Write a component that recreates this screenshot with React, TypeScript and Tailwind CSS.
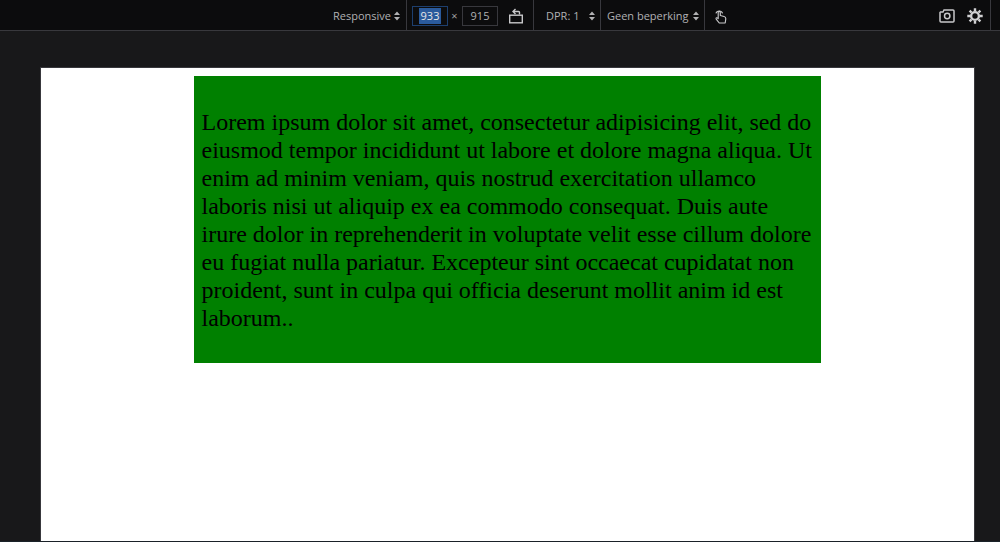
function Arrows() {
  return (
    <svg width="6" height="10" viewBox="0 0 6 10" className="shrink-0">
      <path d="M3 0.5 L6 4 H0 Z M3 9.5 L0 6 H6 Z" fill="#b1b1b3" />
    </svg>
  )
}

function Divider() {
  return <div className="-mt-[2px] h-[30px] w-px bg-[#38383d]" />
}

function RotateIcon() {
  return (
    <svg width="16" height="16" viewBox="0 0 16 16" fill="none" stroke="#c8c8ca" strokeWidth="1.4">
      <rect x="1.7" y="7.2" width="12.6" height="7.6" />
      <path d="M11.5 6.5 V4.5 Q11.5 3.5 10.5 3.5 H5 M7.5 1 L5 3.5 L7.5 6" />
    </svg>
  )
}

function TouchIcon() {
  return (
    <svg width="14" height="16" viewBox="0 0 16 18" fill="none" stroke="#c8c8ca" strokeWidth="1.3" strokeLinejoin="round">
      <path d="M2.2 6 A4 4 0 0 1 9.8 6" />
      <path d="M4.8 10 V5 Q4.8 3.7 6 3.7 Q7.2 3.7 7.2 5 V8.5 L11.5 9.5 Q13.5 10 13.5 12 L12.8 17 H6 L2.5 12.5 Q2 11.3 3 11 Q3.8 10.8 4.8 12 Z" />
    </svg>
  )
}

function CameraIcon() {
  return (
    <svg width="16" height="14" viewBox="0 0 16 14" fill="none" stroke="#c8c8ca" strokeWidth="1.5">
      <path d="M1.5 3 H4 L5 1 H14 Q15 1 15 2 V12 Q15 13 14 13 H2 Q1 13 1 12 V3.5 Z" />
      <circle cx="8.2" cy="7" r="2.7" />
    </svg>
  )
}

function GearIcon() {
  return (
    <svg width="16" height="16" viewBox="0 0 16 16" fill="none" stroke="#d0d0d2">
      <circle cx="8" cy="8" r="3.9" strokeWidth="2.4" />
      <path
        d="M8 0.3 V3 M8 13 V15.7 M0.3 8 H3 M13 8 H15.7 M2.6 2.6 L4.5 4.5 M11.5 11.5 L13.4 13.4 M13.4 2.6 L11.5 4.5 M4.5 11.5 L2.6 13.4"
        strokeWidth="2.4"
      />
    </svg>
  )
}

export default function App() {
  return (
    <div className="flex h-[542px] w-[1000px] flex-col overflow-hidden border-b border-[#1a2128] bg-[#18181a]">
      <div className="flex h-[31px] shrink-0 items-center border-b border-[#38383d] bg-[#0c0c0d] pl-[333px] pt-[2px] font-['Open_Sans',sans-serif] text-[11px] text-[#b1b1b3]">
        <span className="w-[59px] whitespace-nowrap">Responsive</span>
        <div className="ml-[2px]"><Arrows /></div>
        <div className="ml-[6px]"><Divider /></div>
        <div className="ml-[5px] flex h-[20px] w-[36px] items-center justify-center border border-[#1d3f6e] bg-[#0c0c0d]">
          <span className="bg-[#2a5a9c] px-[2px] text-[#e6e6e6]">933</span>
        </div>
        <span className="ml-[1px] w-[11px] text-center text-[#a0a0a3]">×</span>
        <div className="ml-[2px] flex h-[20px] w-[36px] items-center justify-center border border-[#38383d]">915</div>
        <div className="ml-[10px]"><RotateIcon /></div>
        <div className="ml-[9px]"><Divider /></div>
        <span className="ml-[12px] w-[35px] whitespace-nowrap">DPR: 1</span>
        <div className="ml-[8px]"><Arrows /></div>
        <div className="ml-[5px]"><Divider /></div>
        <span className="ml-[6px] w-[83px] whitespace-nowrap">Geen beperking</span>
        <div className="ml-[3px]"><Arrows /></div>
        <div className="ml-[5px]"><Divider /></div>
        <div className="ml-[9px]"><TouchIcon /></div>
        <div className="ml-auto"><CameraIcon /></div>
        <div className="ml-[12px]"><GearIcon /></div>
        <div className="ml-[7px] mr-[9px]"><Divider /></div>
      </div>
      <div className="ml-[40px] mt-[36px] w-[935px] flex-1 border-x border-t border-[#38383d] bg-white pt-[8px]">
        <div className="mx-auto w-[627px] bg-[#008000] py-2 pb-[7px] pl-[7.5px] pr-2 font-['Liberation_Serif',serif] text-[24px] leading-[28px] text-black">
          <p className="my-6">
            Lorem ipsum dolor sit amet, consectetur adipisicing elit, sed do eiusmod tempor incididunt ut labore et
            dolore magna aliqua. Ut enim ad minim veniam, quis nostrud exercitation ullamco laboris nisi ut aliquip ex
            ea commodo consequat. Duis aute irure dolor in reprehenderit in voluptate velit esse cillum dolore eu
            fugiat nulla pariatur. Excepteur sint occaecat cupidatat non proident, sunt in culpa qui officia deserunt
            mollit anim id est laborum..
          </p>
        </div>
      </div>
    </div>
  )
}
